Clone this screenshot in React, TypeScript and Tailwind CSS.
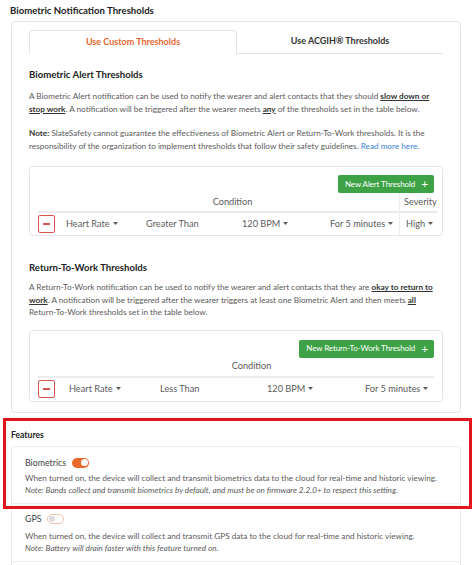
import React from 'react';

const Caret = () => (
  <svg width="5" height="3" viewBox="0 0 5 3" className="inline-block ml-[3px] mb-[2px]">
    <path d="M0 0h5L2.5 3z" fill="currentColor" />
  </svg>
);

const MinusButton = () => (
  <span className="flex items-center justify-center w-[17px] h-[18px] border border-[#d9534f] rounded-[2px] bg-white">
    <span className="block w-[7px] h-[1.5px] bg-[#d9534f]" />
  </span>
);

const GreenButton: React.FC<{ label: string }> = ({ label }) => (
  <button className="flex items-center h-[18px] pl-[7px] pr-[6px] bg-[#3da245] text-white text-[8px] tracking-[-0.1px] rounded-[2px]">
    {label}
    <span className="ml-[6px] text-[12px] leading-none">+</span>
  </button>
);

const Toggle: React.FC<{ on: boolean }> = ({ on }) =>
  on ? (
    <span className="inline-flex items-center justify-end w-[17px] h-[10px] rounded-full bg-[#e8692c] px-[1.5px]">
      <span className="block w-[7px] h-[7px] rounded-full bg-white" />
    </span>
  ) : (
    <span className="inline-flex items-center justify-start w-[17px] h-[10px] rounded-full bg-white border border-[#f0c4ab] px-[1px]">
      <span className="block w-[6px] h-[6px] rounded-full bg-[#dcdcdc]" />
    </span>
  );

const U: React.FC<{ children: React.ReactNode }> = ({ children }) => (
  <span className="font-bold underline text-[#333]">{children}</span>
);

export default function App() {
  return (
    <div className="relative w-[474px] h-[565px] overflow-hidden bg-white text-[#5b5b5b] font-['Lato','Liberation_Sans',sans-serif] text-[8.2px] leading-[12.5px]">
      <h2 className="pl-[10px] pt-[5px] text-[9.6px] leading-[12px] font-bold text-[#222]">
        Biometric Notification Thresholds
      </h2>

      <div className="mt-[4px] mx-[11px] w-[450px] border border-[#e6e6e6] rounded-[4px] px-[17px] pt-[8px] pb-[10px]">
        {/* tabs */}
        <div className="flex h-[24px]">
          <div className="w-[208px] flex items-center justify-center border border-b-0 border-[#e3e3e3] rounded-t-[4px] text-[#e8662e] font-bold text-[9px]">
            Use Custom Thresholds
          </div>
          <div className="flex-1 flex items-center justify-center border-b border-[#e3e3e3] font-bold text-[#333] text-[9px]">
            Use ACGIH® Thresholds
          </div>
        </div>

        <h3 className="mt-[14px] text-[9.6px] leading-[14px] font-bold text-[#222]">Biometric Alert Thresholds</h3>
        <p className="mt-[8px]">
          A Biometric Alert notification can be used to notify the wearer and alert contacts that they should{' '}
          <U>slow down or stop work</U>. A notification will be triggered after the wearer meets <U>any</U> of the
          thresholds set in the table below.
        </p>
        <p className="mt-[12px]">
          <span className="font-bold text-[#333]">Note:</span> SlateSafety cannot guarantee the effectiveness of
          Biometric Alert or Return-To-Work thresholds. It is the responsibility of the organization to implement
          thresholds that follow their safety guidelines. <span className="text-[#3b7fd4]">Read more here.</span>
        </p>

        {/* alert table */}
        <div className="mt-[14px] border border-[#e6e6e6] rounded-[4px] px-[8px] pt-[8px] text-[9.2px]">
          <div className="flex justify-end">
            <GreenButton label="New Alert Threshold" />
          </div>
          <div className="grid grid-cols-[28px_80px_96px_88px_69px_1fr]">
            <div className="col-start-2 col-span-4 h-[20px] flex items-end justify-center pb-[3px] border-b-2 border-[#ececec]">
              Condition
            </div>
            <div className="col-start-1 row-start-1 border-b-2 border-[#ececec]" />
            <div className="h-[20px] flex items-end pl-[4px] pb-[3px] border-l border-b-2 border-[#ececec]">Severity</div>
            <div className="h-[22px] flex items-center">
              <MinusButton />
            </div>
            <div className="flex items-center">Heart Rate<Caret /></div>
            <div className="flex items-center">Greater Than</div>
            <div className="flex items-center">120 BPM<Caret /></div>
            <div className="flex items-center">For 5 minutes<Caret /></div>
            <div className="flex items-center pl-[6px] border-l border-[#ececec]">High<Caret /></div>
          </div>
        </div>

        <h3 className="mt-[25px] text-[9.6px] leading-[14px] font-bold text-[#222]">Return-To-Work Thresholds</h3>
        <p className="mt-[6px]">
          A Return-To-Work notification can be used to notify the wearer and alert contacts that they are{' '}
          <U>okay to return to work</U>. A notification will be triggered after the wearer triggers at least one
          Biometric Alert and then meets <U>all</U> Return-To-Work thresholds set in the table below.
        </p>

        {/* return to work table */}
        <div className="mt-[11px] border border-[#e6e6e6] rounded-[4px] px-[8px] pt-[9px] text-[9.2px]">
          <div className="flex justify-end">
            <GreenButton label="New Return-To-Work Threshold" />
          </div>
          <div className="grid grid-cols-[31px_91px_107px_98px_1fr]">
            <div className="border-b-2 border-[#ececec]" />
            <div className="col-span-4 h-[20px] flex items-end justify-center pb-[3px] border-b-2 border-[#ececec]">
              Condition
            </div>
            <div className="h-[23px] flex items-center">
              <MinusButton />
            </div>
            <div className="flex items-center">Heart Rate<Caret /></div>
            <div className="flex items-center">Less Than</div>
            <div className="flex items-center">120 BPM<Caret /></div>
            <div className="flex items-center">For 5 minutes<Caret /></div>
          </div>
        </div>
      </div>

      {/* features */}
      <div className="mt-[16px] mx-[11px] w-[450px]">
        <h3 className="text-[8.6px] leading-[12px] font-bold text-[#222]">Features</h3>
        <div className="mt-[5px] border border-[#ebebeb] rounded-[3px]">
          <div className="px-[13px] pt-[10px] pb-[6px] border-b border-[#ebebeb]">
            <div className="flex items-center gap-[6px] text-[#444] text-[8.8px] leading-[12px]">
              Biometrics <Toggle on />
            </div>
            <p className="mt-[3px]">
              When turned on, the device will collect and transmit biometrics data to the cloud for real-time and
              historic viewing.
            </p>
            <p className="italic">
              Note: Bands collect and transmit biometrics by default, and must be on firmware 2.2.0+ to respect this
              setting.
            </p>
          </div>
          <div className="px-[13px] pt-[9px] pb-[6px] border-b border-[#ebebeb]">
            <div className="flex items-center gap-[6px] text-[#444] text-[8.8px] leading-[12px]">
              GPS <Toggle on={false} />
            </div>
            <p className="mt-[5px]">
              When turned on, the device will collect and transmit GPS data to the cloud for real-time and historic
              viewing.
            </p>
            <p className="italic">Note: Battery will drain faster with this feature turned on.</p>
          </div>
          <div className="h-[20px]" />
        </div>
      </div>

      {/* annotation box */}
      <div className="absolute left-[3px] top-[418px] w-[469px] h-[91px] border-[3px] border-[#e3141e] pointer-events-none" />
    </div>
  );
}
